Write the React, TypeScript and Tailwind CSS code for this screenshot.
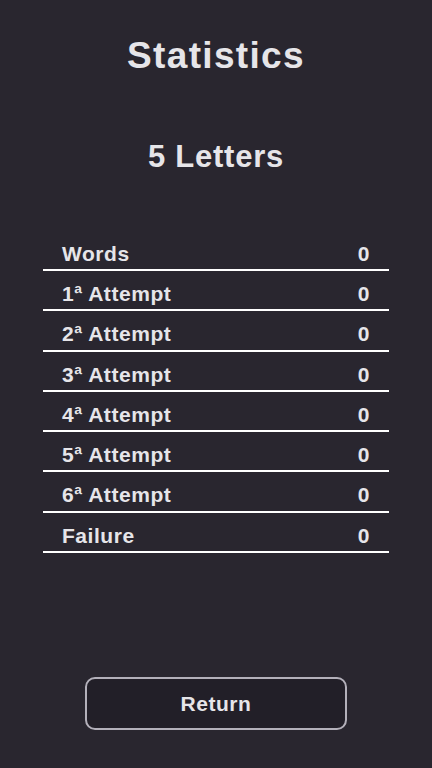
import React from 'react';

type StatRow = { label: string; value: number };

const rows: StatRow[] = [
  { label: 'Words', value: 0 },
  { label: '1ª Attempt', value: 0 },
  { label: '2ª Attempt', value: 0 },
  { label: '3ª Attempt', value: 0 },
  { label: '4ª Attempt', value: 0 },
  { label: '5ª Attempt', value: 0 },
  { label: '6ª Attempt', value: 0 },
  { label: 'Failure', value: 0 },
];

export default function App() {
  return (
    <div
      className="h-[768px] w-full bg-[#29262f] flex flex-col items-center text-[#e6e5e9] font-bold"
      style={{ fontFamily: '"Liberation Sans", Arial, sans-serif' }}
    >
      {/* 标题 */}
      <h1 className="pt-[36.7px] text-[37px] leading-[37px] tracking-[0.036em]">Statistics</h1>

      {/* 字母数 */}
      <h2 className="mt-[67.1px] text-[31px] leading-[31px] tracking-[0.024em]">5 Letters</h2>

      {/* 统计列表 */}
      <div className="mt-[58.9px] w-[346px] flex flex-col">
        {rows.map((row) => (
          <div
            key={row.label}
            className="h-[40.3px] flex items-end justify-between border-b-2 border-white pl-[19px] pr-[19px] pb-[5.3px] text-[21px] leading-[21px] tracking-[0.026em]"
          >
            <span>{row.label}</span>
            <span>{row.value}</span>
          </div>
        ))}
      </div>

      {/* 返回按钮 */}
      <button className="mt-[124px] w-[262px] h-[53px] rounded-[10px] border-2 border-[#b3b0ba] bg-[#221f28] text-[21px] leading-[21px] tracking-[0.026em] text-[#e6e5e9] font-bold">
        Return
      </button>
    </div>
  );
}
